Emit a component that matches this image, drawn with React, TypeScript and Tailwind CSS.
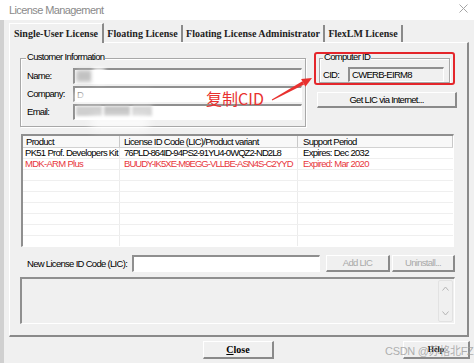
import type { ReactNode } from "react"

const serif = "font-['Liberation_Serif','Times_New_Roman',serif]"
const raised =
  "border-t border-l border-r-2 border-b-2 border-t-white border-l-white border-r-[#8a8a8a] border-b-[#8a8a8a]"
const sunken =
  "border-t-2 border-l-2 border-r border-b border-t-[#8f8f8f] border-l-[#8f8f8f] border-r-white border-b-white"

function Button({
  children,
  className = "",
  disabled = false,
}: {
  children: ReactNode
  className?: string
  disabled?: boolean
}) {
  return (
    <div
      className={`flex items-center justify-center whitespace-nowrap bg-[#f0f0f0] leading-none ${raised} ${
        disabled ? "text-[#a9a9a9]" : "text-black"
      } ${className}`}
    >
      {children}
    </div>
  )
}

const tabs = [
  { label: "Single-User License", w: "w-[95px]", active: true },
  { label: "Floating License", w: "w-[79px]", active: false },
  { label: "Floating License Administrator", w: "w-[142px]", active: false },
  { label: "FlexLM License", w: "w-[78px]", active: false },
]

const rows = [
  {
    product: "PK51 Prof. Developers Kit",
    lic: "76PLD-864ID-94PS2-91YU4-0WQZ2-ND2L8",
    period: "Expires: Dec 2032",
    red: false,
  },
  {
    product: "MDK-ARM Plus",
    lic: "BUUDY-IK5XE-M9EGG-VLLBE-ASN4S-C2YYD",
    period: "Expired: Mar 2020",
    red: true,
  },
]

function Field({ label, children }: { label: string; children?: ReactNode }) {
  return (
    <div className="flex h-[16px] items-center">
      <span className="w-[46px] leading-none">{label}</span>
      <div className={`flex h-[16px] w-[229px] items-center bg-white pl-[2px] ${sunken}`}>{children}</div>
    </div>
  )
}

export default function App() {
  return (
    <div className="relative h-[363px] w-[474px] overflow-hidden bg-[#f0f0f0] font-['Liberation_Sans',Arial,sans-serif] text-[9.5px] tracking-[-0.7px] text-black">
      {/* title bar */}
      <div className="flex h-[20px] items-center justify-between bg-white pl-[9px] pr-[6px]">
        <span className="text-[11px] leading-none tracking-[-0.6px] text-[#8a8a8a]">License Management</span>
        <svg width="9" height="9" viewBox="0 0 9 9" className="mb-[3px]">
          <path d="M0.5 0.5 L8.5 8.5 M8.5 0.5 L0.5 8.5" stroke="#a5a5a5" strokeWidth="1" />
        </svg>
      </div>

      <div className="flex h-[343px]">
        <div className="w-[4px] bg-[#d0d0d0]" />
        <div className="ml-[5px] flex w-[461px] flex-col">
          {/* tabs */}
          <div className={`flex h-[22px] items-end ${serif} text-[10px] font-bold tracking-normal text-[#222]`}>
            {tabs.map((t) =>
              t.active ? (
                <div
                  key={t.label}
                  className={`relative z-10 -mb-px flex h-[20px] ${t.w} items-center justify-center whitespace-nowrap border-t border-l border-r-2 border-t-white border-l-white border-r-[#8a8a8a] bg-[#f0f0f0] leading-none`}
                >
                  {t.label}
                </div>
              ) : (
                <div
                  key={t.label}
                  className={`flex h-[17px] ${t.w} items-center justify-center whitespace-nowrap border-r-2 border-r-[#8a8a8a] leading-none`}
                >
                  {t.label}
                </div>
              ),
            )}
          </div>

          {/* panel */}
          <div className="flex h-[295px] w-[460px] flex-col border-t border-l border-r-2 border-b-2 border-t-white border-l-white border-r-[#8a8a8a] border-b-[#8a8a8a]">
            <div className="mt-[15px] flex items-start">
              {/* customer info */}
              <div className="relative ml-[10px] flex h-[69px] w-[286px] flex-col gap-[2px] border border-[#a8a8a8] pt-[9px] pl-[6px] shadow-[inset_1px_1px_0_#fff,1px_1px_0_#fff]">
                <span className="absolute top-[-7px] left-[5px] bg-[#f0f0f0] px-[1px] leading-none">
                  Customer Information
                </span>
                <Field label="Name:" />
                <Field label="Company:">
                  <span className="leading-none text-[#555]">D</span>
                </Field>
                <Field label="Email:" />
              </div>

              {/* computer id */}
              <div className="ml-[8px] flex w-[143px] flex-col">
                <div className="relative ml-[5px] flex h-[25px] w-[131px] items-start border border-[#a8a8a8] pt-[8px] pl-[3px] shadow-[inset_1px_1px_0_#fff,1px_1px_0_#fff]">
                  <span className="absolute top-[-7px] left-[3px] bg-[#f0f0f0] px-[1px] leading-none">Computer ID</span>
                  <span className="flex h-[15px] w-[25px] items-center leading-none">CID:</span>
                  <div className={`flex h-[15px] w-[96px] items-center bg-[#f0f0f0] pl-[2px] leading-none ${sunken}`}>
                    CWERB-EIRM8
                  </div>
                </div>
                <Button className="mt-[9px] ml-[3px] h-[16px] w-[140px]">Get LIC via Internet...</Button>
              </div>
            </div>

            {/* list view */}
            <div className={`mt-[7px] ml-[11px] h-[113px] w-[433px] overflow-hidden bg-white ${sunken}`}>
              <div className="flex h-[12px] items-center border-b border-[#d2d2d2] bg-[#f8f8f8] leading-none">
                <div className="flex h-full w-[97px] items-center border-r border-[#c9c9c9] pl-[3px]">Product</div>
                <div className="flex h-full w-[178px] items-center border-r border-[#c9c9c9] pl-[4px] whitespace-nowrap">
                  License ID Code (LIC)/Product variant
                </div>
                <div className="flex h-full flex-1 items-center border-r border-[#c9c9c9] pl-[5px]">Support Period</div>
              </div>
              {Array.from({ length: 9 }).map((_, i) => {
                const r = rows[i]
                return (
                  <div
                    key={i}
                    className={`flex h-[11px] items-center border-b border-[#efefef] leading-none whitespace-nowrap ${
                      r?.red ? "text-[#e8363c]" : "text-black"
                    }`}
                  >
                    <div className="flex h-full w-[97px] items-center border-r border-[#ececec] pl-[2px]">
                      {r?.product}
                    </div>
                    <div className="flex h-full w-[178px] items-center border-r border-[#ececec] pl-[4px] tracking-[-0.95px]">
                      {r?.lic}
                    </div>
                    <div className="flex h-full flex-1 items-center pl-[5px]">{r?.period}</div>
                  </div>
                )
              })}
            </div>

            {/* new lic */}
            <div className="mt-[8px] ml-[17px] flex h-[17px] items-center">
              <span className="w-[105px] whitespace-nowrap leading-none">New License ID Code (LIC):</span>
              <div className={`h-[17px] w-[188px] bg-white ${sunken}`} />
              <Button disabled className="ml-[6px] h-[17px] w-[64px]">
                Add LIC
              </Button>
              <Button disabled className="ml-[2px] h-[17px] w-[63px]">
                Uninstall...
              </Button>
            </div>

            {/* message area */}
            <div className={`mt-[5px] ml-[10px] flex h-[47px] w-[435px] justify-end bg-[#f0f0f0] ${sunken}`}>
              <div className="my-[1px] mr-[1px] flex w-[15px] flex-col items-center justify-between rounded-[2px] border border-[#e2e2e2] py-[5px]">
                <svg width="7" height="5" viewBox="0 0 7 5">
                  <path d="M0.5 4.5 L3.5 1 L6.5 4.5" fill="none" stroke="#b4b4b4" strokeWidth="1" />
                </svg>
                <svg width="7" height="5" viewBox="0 0 7 5">
                  <path d="M0.5 0.5 L3.5 4 L6.5 0.5" fill="none" stroke="#b4b4b4" strokeWidth="1" />
                </svg>
              </div>
            </div>
          </div>

          {/* footer */}
          <div className={`flex h-[26px] items-start pt-[4px] ${serif} text-[10px] font-bold tracking-normal`}>
            <Button className="ml-[194px] h-[18px] w-[71px]">
              <span className="underline">C</span>lose
            </Button>
            <Button className="ml-[129px] h-[18px] w-[67px] text-[8px]">Help</Button>
          </div>
        </div>
      </div>

      {/* blurred personal data */}
      <div className="pointer-events-none absolute top-[70px] left-[76px] h-[12px] w-[16px] bg-[#c2c2c2] blur-[2px]" />
      <div className="pointer-events-none absolute top-[68px] left-[93px] h-[15px] w-[12px] bg-white blur-[2px]" />
      <div className="pointer-events-none absolute top-[106px] left-[76px] h-[10px] w-[26px] bg-[#cfcfcf] blur-[1.5px]" />
      <div className="pointer-events-none absolute top-[106px] left-[104px] h-[10px] w-[26px] bg-[#c4c4c4] blur-[1.5px]" />
      <div className="pointer-events-none absolute top-[106px] left-[132px] h-[10px] w-[20px] bg-[#d6d6d6] blur-[1.5px]" />
      <div className="pointer-events-none absolute top-[92px] left-[74px] h-[10px] w-[80px] rounded-full bg-white/80 blur-[3px]" />
      <div className="pointer-events-none absolute top-[116px] left-[90px] h-[14px] w-[60px] rounded-full bg-white/70 blur-[4px]" />

      {/* annotation */}
      <div className="pointer-events-none absolute top-[52px] left-[314px] h-[33px] w-[141px] rounded-[3px] border-2 border-[#e4262b]" />
      <span className="pointer-events-none absolute top-[86px] left-[206px] font-['Noto_Sans_CJK_SC','Noto_Sans',sans-serif] text-[16px] leading-normal tracking-normal text-[#e8302e]">
        复制CID
      </span>
      <svg className="pointer-events-none absolute top-0 left-0" width="474" height="363" viewBox="0 0 474 363">
        <polygon points="271.8,99.6 272.2,100.4 304.1,84.4 302.4,81.2" fill="#e8302e" />
        <polygon points="312,78 305.4,86.8 301.1,78.9" fill="#e8302e" />
      </svg>

      {/* watermark */}
      <span className="pointer-events-none absolute top-[343px] left-[385px] font-['Liberation_Sans','Noto_Sans_CJK_SC',sans-serif] text-[11px] leading-normal tracking-[-0.3px] text-[#9c9c9c]/80">
        CSDN @苏格北FZ
      </span>
    </div>
  )
}
